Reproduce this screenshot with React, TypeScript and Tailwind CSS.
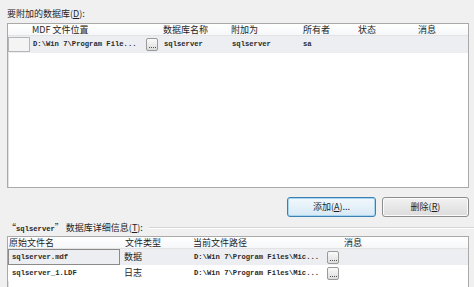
import React from 'react';

const cjk = { fontFamily: '"Noto Sans CJK SC", "Noto Sans", sans-serif' };
const mono = { fontFamily: '"Liberation Mono", "DejaVu Sans Mono", monospace' };

function DotsButton() {
  return (
    <div className="w-[12px] h-[13px] rounded-[2px] border border-[#9a9a9a] bg-gradient-to-b from-[#fbfbfb] to-[#dcdcdc] flex items-end justify-center pb-[2px]">
      <span className="block w-[7px] h-[1px] border-t border-dotted border-[#555]" />
    </div>
  );
}

const attachCols = [
  { label: 'MDF 文件位置', w: 'w-[131px]', pl: 'pl-[2px]' },
  { label: '数据库名称', w: 'w-[69px]', pl: 'pl-[2px]' },
  { label: '附加为', w: 'w-[71px]', pl: 'pl-[1px]' },
  { label: '所有者', w: 'w-[55px]', pl: 'pl-[2px]' },
  { label: '状态', w: 'w-[60px]', pl: 'pl-[2px]' },
  { label: '消息', w: 'flex-1', pl: 'pl-[2px]' },
];

const detailRows = [
  { name: 'sqlserver.mdf', type: '数据', path: 'D:\\Win 7\\Program Files\\Mic...', selected: true },
  { name: 'sqlserver_1.LDF', type: '日志', path: 'D:\\Win 7\\Program Files\\Mic...', selected: false },
];

export default function App() {
  return (
    <div className="w-[474px] h-[287px] overflow-hidden bg-[#f0f0f0] pl-[7px] pr-[5px] pt-[8px] text-[#1e1e1e]" style={cjk}>
      {/* attach list */}
      <div className="h-[15px] text-[9px] leading-[12px]">
        要附加的数据库(<span className="underline">D</span>):
      </div>
      <div className="h-[165px] border border-[#a9a9a9] bg-white shadow-[inset_1px_1px_0_#e2e2e2]">
        <div className="flex h-[12px] border-b border-[#e3e3e3] bg-gradient-to-b from-white to-[#f6f7f9] text-[9px] leading-[11px]">
          <div className="w-[22px]" />
          {attachCols.map((c) => (
            <div key={c.label} className={`${c.w} ${c.pl} whitespace-nowrap`}>
              {c.label}
            </div>
          ))}
        </div>
        <div className="flex h-[17px] items-center bg-[#eceef2] text-[7.2px]" style={mono}>
          <div className="w-[22px] h-[15px] border border-[#b5b5b5] bg-[#f4f4f4]" />
          <div className="w-[131px] pl-[3px] flex items-center justify-between pr-[3px]">
            <span className="font-bold text-[#2a2a2a]">D:\Win 7\Program File...</span>
            <DotsButton />
          </div>
          <div className="w-[69px] pl-[3px] font-bold text-[#2a2a2a]">sqlserver</div>
          <div className="w-[71px] pl-[2px] font-bold text-[#2a2a2a]">sqlserver</div>
          <div className="w-[55px] pl-[2px] font-bold text-[#2a2a2a]">sa</div>
          <div className="flex-1" />
        </div>
      </div>

      {/* buttons */}
      <div className="flex justify-end gap-[6px] mt-[9px] h-[20px] pr-[0px]">
        <button className="w-[89px] h-[20px] rounded-[3px] border border-[#3c7fb1] bg-gradient-to-b from-[#f2f8fc] to-[#d7e9f5] shadow-[inset_0_0_0_1px_#a7d4ee] text-[9px] leading-[18px]">
          添加(<span className="underline">A</span>)...
        </button>
        <button className="w-[87px] h-[20px] rounded-[3px] border border-[#8d8d8d] bg-gradient-to-b from-[#f2f2f2] to-[#dcdcdc] shadow-[inset_0_0_0_1px_#fbfbfb] text-[9px] leading-[18px]">
          删除(<span className="underline">R</span>)
        </button>
      </div>

      {/* details */}
      <div className="flex items-center mt-[4px] h-[14px] text-[9px]">
        <span className="whitespace-nowrap">
          “<span className="text-[7.2px] font-bold" style={mono}>sqlserver</span>” 数据库详细信息(<span className="underline">T</span>):
        </span>
        <div className="flex-1 ml-[6px] mr-[-5px] h-[2px] border-t border-[#d5d5d5] border-b border-b-white" />
      </div>
      <div className="mt-[1px] h-[60px] border border-[#a9a9a9] bg-white shadow-[inset_1px_1px_0_#e2e2e2]">
        <div className="flex h-[12px] border-b border-[#e3e3e3] bg-gradient-to-b from-white to-[#f6f7f9] text-[9px] leading-[11px]">
          <div className="w-[115px] pl-[1px]">原始文件名</div>
          <div className="w-[69px] pl-[2px]">文件类型</div>
          <div className="w-[151px] pl-[1px]">当前文件路径</div>
          <div className="flex-1 pl-[1px]">消息</div>
        </div>
        {detailRows.map((r) => (
          <div
            key={r.name}
            className={`flex h-[16px] items-center ${r.selected ? 'bg-[#eceef2]' : 'bg-white'}`}
          >
            <div
              className={`w-[112px] h-[16px] pl-[3px] flex items-center font-bold text-[7.2px] text-[#2a2a2a] ${
                r.selected ? 'border border-[#8a8a8a]' : 'border border-transparent'
              }`}
              style={mono}
            >
              {r.name}
            </div>
            <div className="w-[72px] pl-[4px] text-[9px]">{r.type}</div>
            <div className="w-[151px] pl-[2px] pr-[4px] flex items-center justify-between">
              <span className="font-bold text-[7.2px] text-[#2a2a2a]" style={mono}>
                {r.path}
              </span>
              <DotsButton />
            </div>
            <div className="flex-1" />
          </div>
        ))}
      </div>
    </div>
  );
}
